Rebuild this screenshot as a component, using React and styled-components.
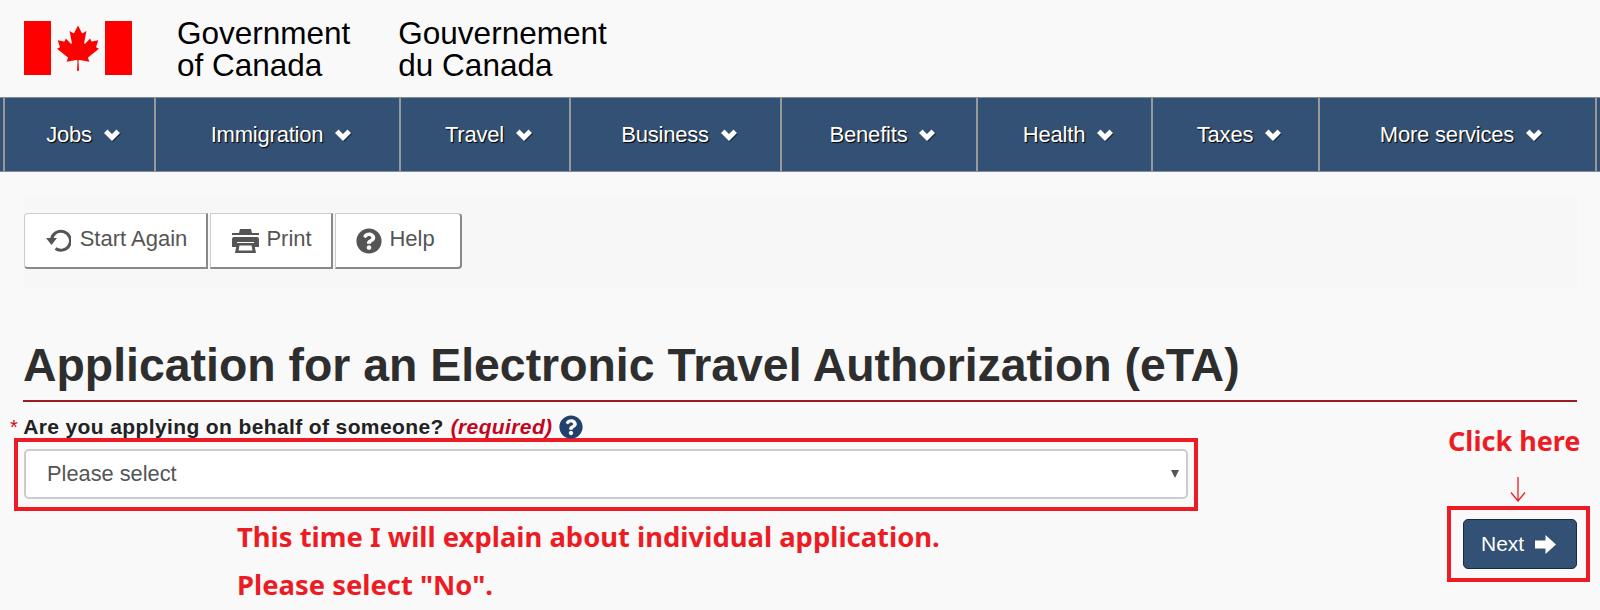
import React from "react";
import styled, { createGlobalStyle } from "styled-components";
import { FaQuestionCircle } from "react-icons/fa";

const GlobalStyle = createGlobalStyle`
  html, body {
    margin: 0;
    padding: 0;
    background: #f9f9f9;
    font-family: "Liberation Sans", Arial, sans-serif;
  }
`;

const Page = styled.div`
  width: 1600px;
  height: 610px;
  overflow: hidden;
`;

const Header = styled.header`
  display: flex;
  height: 97px;
  padding: 21px 0 0 24px;
  box-sizing: border-box;
`;

const FlagSvg = styled.svg`
  width: 108px;
  height: 54px;
  margin-right: 45px;
`;

const Signature = styled.div`
  margin-right: 48px;
  margin-top: -4px;
  font-size: 31.5px;
  line-height: 32px;
  color: #000;
`;

const Nav = styled.nav`
  display: flex;
  height: 75px;
  padding: 0 2px 0 3px;
  background: #335075;
  border-top: 1px solid #7f8c9c;
  border-bottom: 1px solid #7f8c9c;
  box-sizing: border-box;
`;

const NavItem = styled.div`
  flex: 0 0 ${(props) => props.$width}px;
  box-sizing: border-box;
  display: flex;
  align-items: center;
  justify-content: center;
  gap: 12px;
  padding-left: 7px;
  color: #fff;
  font-size: 22px;
  letter-spacing: -0.2px;
  text-shadow: 1px 1px 1px #000;
  border-right: 2px solid #999;
  &:first-child {
    border-left: 2px solid #999;
  }
`;

const Chevron = styled.svg`
  width: 16px;
  height: 12px;
  filter: drop-shadow(1px 1px 0 #1a2a40);
`;

const Toolbar = styled.div`
  display: flex;
  margin: 23px 23px 0 24px;
  height: 93px;
  padding-top: 18px;
  box-sizing: border-box;
  background: #f7f7f7;
`;

const ToolButton = styled.div`
  flex: 0 0 ${(props) => props.$width}px;
  height: 56px;
  box-sizing: border-box;
  margin-right: 2px;
  padding: ${(props) => props.$pad};
  display: flex;
  align-items: center;
  justify-content: center;
  gap: ${(props) => props.$gap}px;
  background: #fff;
  color: #555;
  font-size: 22px;
  border: 1px solid #ccc;
  border-right: 2px solid #888;
  border-bottom: 2px solid #888;
  border-radius: ${(props) => props.$radius || "0"};
  svg {
    color: #555;
    margin-top: 3px;
    flex: none;
  }
`;

const Heading = styled.h1`
  margin: 43px 23px 0 23px;
  height: 69px;
  font-size: 46.4px;
  line-height: 68px;
  font-weight: 700;
  color: #2e2e2e;
  border-bottom: 2px solid #9b1c22;
  box-sizing: content-box;
`;

const Form = styled.div`
  display: flex;
  justify-content: space-between;
  padding: 0 10px;
`;

const Left = styled.div`
  width: 1188px;
`;

const Label = styled.div`
  height: 36px;
  padding-top: 14px;
  box-sizing: border-box;
  display: flex;
  align-items: center;
  font-size: 21px;
  font-weight: 700;
  color: #222;
  letter-spacing: 0.38px;
`;

const Star = styled.span`
  color: #d3080c;
  font-weight: 400;
  font-size: 20px;
  margin-right: 5px;
`;

const Required = styled.em`
  color: #c4041c;
  margin-left: 7px;
  margin-right: 7px;
`;

const HelpIcon = styled(FaQuestionCircle)`
  color: #23426b;
  font-size: 24px;
`;

const CalloutBox = styled.div`
  margin-left: ${(props) => props.$left || 0}px;
  border: 4px solid #ed1c24;
  box-sizing: border-box;
  padding: ${(props) => props.$pad};
`;

const SelectBox = styled.div`
  height: 50px;
  box-sizing: border-box;
  display: flex;
  align-items: center;
  justify-content: space-between;
  padding: 0 7px 0 21px;
  background: #fff;
  border: 2px solid #ccc;
  border-radius: 5px;
  color: #555;
  font-size: 21.8px;
`;

const Caret = styled.span`
  width: 0;
  height: 0;
  border-left: 4px solid transparent;
  border-right: 4px solid transparent;
  border-top: 8px solid #555;
`;

const Notes = styled.div`
  padding: 2px 0 0 227px;
  color: #ed1c24;
  font-family: "Noto Sans", sans-serif;
  font-size: 27.4px;
  font-weight: 700;
  line-height: 48px;
  white-space: nowrap;
`;

const Right = styled.div`
  width: 143px;
  display: flex;
  flex-direction: column;
  align-items: flex-start;
  padding-top: 19px;
`;

const ClickHere = styled.div`
  margin-left: 1px;
  color: #ed1c24;
  font-family: "Noto Sans", sans-serif;
  font-size: 27px;
  font-weight: 700;
  line-height: 40px;
`;

const DownArrow = styled.svg`
  width: 16px;
  height: 25px;
  margin: 16px 0 4px 63px;
`;

const NextButton = styled.div`
  width: 114px;
  height: 50px;
  box-sizing: border-box;
  display: flex;
  align-items: center;
  gap: 11px;
  padding-left: 17px;
  background: #335075;
  color: #fff;
  font-size: 21px;
  border: 1px solid #14284a;
  border-radius: 5px;
`;

const Flag = () => (
  <FlagSvg viewBox="0 0 9600 4800">
    <path fill="#f00" d="M0 0h2400l99 99h4602l99-99h2400v4800h-2400l-99-99h-4602l-99 99h-2400z" />
    <path
      fill="#f9f9f9"
      d="M2400 0h4800v4800h-4800zm2490 4430-45-863a95 95 0 0 1 111-98l859 151-116-320a65 65 0 0 1 20-73l941-762-212-99a65 65 0 0 1-34-79l186-572-542 115a65 65 0 0 1-73-38l-105-247-423 454a65 65 0 0 1-111-57l204-1052-327 189a65 65 0 0 1-91-27l-332-652-332 652a65 65 0 0 1-91 27l-327-189 204 1052a65 65 0 0 1-111 57l-423-454-105 247a65 65 0 0 1-73 38l-542-115 186 572a65 65 0 0 1-34 79l-212 99 941 762a65 65 0 0 1 20 73l-116 320 859-151a95 95 0 0 1 111 98l-45 863z"
    />
  </FlagSvg>
);

const ChevronIcon = () => (
  <Chevron viewBox="0 0 16 12">
    <path d="M0 4 3.5.5 8 5 12.5.5 16 4 8 12z" fill="#fff" />
  </Chevron>
);

const AgainIcon = () => (
  <svg width="25" height="23" viewBox="0 0 25 23">
    <path d="M5.5 10.5A9.5 9.5 0 1 1 9.5 19.5" fill="none" stroke="#555" strokeWidth="3" />
    <path d="M0 9h11l-5.500 7z" fill="#555" />
  </svg>
);

const PrintIcon = () => (
  <svg width="27" height="24" viewBox="0 0 27 24">
    <path d="M8 0h11l1 4h7v2H0V4h7z" fill="#555" />
    <path d="M2 8h23a2 2 0 0 1 2 2v8h-5v-5H5v5H0v-8a2 2 0 0 1 2-2z" fill="#555" />
    <path d="M5 14h17l2 10H3zm2.500 2.500-1 5h14l-1-5z" fill="#555" fillRule="evenodd" />
  </svg>
);

const menu = [
  ["Jobs", 153],
  ["Immigration", 245],
  ["Travel", 170],
  ["Business", 211],
  ["Benefits", 196],
  ["Health", 175],
  ["Taxes", 167],
  ["More services", 277],
];

const App = () => (
  <Page>
    <GlobalStyle />
    <Header>
      <Flag />
      <Signature>Government<br />of Canada</Signature>
      <Signature>Gouvernement<br />du Canada</Signature>
    </Header>
    <Nav>
      {menu.map(([name, width]) => (
        <NavItem key={name} $width={width}>
          {name} <ChevronIcon />
        </NavItem>
      ))}
    </Nav>
    <Toolbar>
      <ToolButton $width={184} $gap={9} $pad="0 0 3px 2px" $radius="4px 0 0 4px"><AgainIcon />Start Again</ToolButton>
      <ToolButton $width={123} $gap={7} $pad="0 0 3px 2px"><PrintIcon />Print</ToolButton>
      <ToolButton $width={127} $gap={7} $pad="0 5px 3px 0" $radius="0 4px 4px 0"><FaQuestionCircle size={26} />Help</ToolButton>
    </Toolbar>
    <Heading>Application for an Electronic Travel Authorization (eTA)</Heading>
    <Form>
      <Left>
        <Label><Star>*</Star>Are you applying on behalf of someone?<Required>(required)</Required><HelpIcon /></Label>
        <CalloutBox $left={4} $pad="7px 6px 8px 6px">
          <SelectBox>Please select<Caret /></SelectBox>
        </CalloutBox>
        <Notes>
          This time I will explain about individual application.<br />
          Please select "No".
        </Notes>
      </Left>
      <Right>
        <ClickHere>Click here</ClickHere>
        <DownArrow viewBox="0 0 16 25">
          <path d="M8 0v24M1 15.500l7 8.500 7-8.500" fill="none" stroke="#ed1c24" strokeWidth="1.3" />
        </DownArrow>
        <CalloutBox $pad="9px 9px 9px 12px">
          <NextButton>
            Next
            <svg width="21" height="19" viewBox="0 0 21 19">
              <path d="M0 5.500h10.500V0L21 9.500 10.500 19v-5.500H0z" fill="#fff" />
            </svg>
          </NextButton>
        </CalloutBox>
      </Right>
    </Form>
  </Page>
);

export default App;
